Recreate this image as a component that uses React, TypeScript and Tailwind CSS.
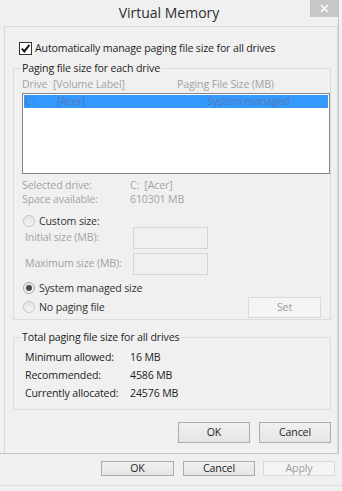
import React from 'react';
import clsx from 'clsx';

function Btn({ children, className, disabled }: { children: React.ReactNode; className?: string; disabled?: boolean }) {
  return (
    <button
      type="button"
      className={clsx(
        'flex items-center justify-center border leading-none',
        disabled
          ? 'border-[#d9d9d9] bg-[#f4f4f4] text-[#9d9d9d]'
          : 'border-[#acacac] bg-linear-to-b from-[#f0f0f0] to-[#e5e5e5] text-[#1e1e1e]',
        className
      )}
    >
      {children}
    </button>
  );
}

function Radio({ checked }: { checked?: boolean }) {
  return (
    <span
      className={clsx(
        'flex items-center justify-center w-[12px] h-[12px] rounded-full border bg-linear-to-b from-[#e4e4e4] to-[#f6f6f6]',
        checked ? 'border-[#a8a8a8]' : 'border-[#c4c4c4]'
      )}
    >
      {checked && <span className="w-[6px] h-[6px] rounded-full bg-[#4a4a4a]" />}
    </span>
  );
}

function Checkbox() {
  return (
    <span className="flex items-center justify-center w-[13px] h-[13px] border border-[#333] bg-white">
      <svg width="11" height="11" viewBox="0 0 11 11">
        <path d="M1.8 5.6 L4.3 8.4 L9.4 1.8" fill="none" stroke="#111" strokeWidth="1.9" />
      </svg>
    </span>
  );
}

export default function App() {
  return (
    <div className="relative w-[342px] h-[491px] overflow-hidden bg-[#f0f0f0] font-['Open_Sans',sans-serif] text-[10.6px] tracking-[-0.15px] text-[#1e1e1e]">
      {/* Performance Options window behind the dialog */}
      <div className="flex flex-col pt-[461px]">
        <div className="flex pl-[101px]">
          <Btn className="w-[73px] h-[15px]">OK</Btn>
          <Btn className="ml-[9px] w-[72px] h-[15px]">Cancel</Btn>
          <Btn disabled className="ml-[8px] w-[72px] h-[15px]">Apply</Btn>
        </div>
        <div className="mt-[9px] border-t border-[#dcdcdc]" />
      </div>

      {/* Virtual Memory dialog */}
      <div className="absolute left-0 top-0 w-[339px] h-[454px] border-r border-b border-[#c6c6c6] bg-[#f0f0f0]">
        <div className="flex h-[26px]">
          <div className="w-[28px]" />
          <div className="flex-1 text-center text-[14px] tracking-normal leading-[26px] text-[#2e2e2e]">Virtual Memory</div>
          <div className="flex items-center justify-center w-[28px] h-[17px] bg-[#c7c7c7]">
            <svg width="9" height="9" viewBox="0 0 9 9">
              <path d="M1 1 L8 8 M8 1 L1 8" stroke="#fff" strokeWidth="1.6" />
            </svg>
          </div>
        </div>

        <div className="ml-[4px] w-[334px] h-[427px] border-l border-t border-r border-[#d9d9d9]">
          <div className="flex items-center h-[12px] mt-[15px] pl-[14px]">
            <Checkbox />
            <span className="ml-[3px] leading-[12px]">Automatically manage paging file size for all drives</span>
          </div>

          <fieldset className="mt-[6px] ml-[8px] w-[318px] border border-[#dcdcdc]">
            <legend className="ml-[7px] px-[1px] leading-[16px]">Paging file size for each drive</legend>
            <div className="pl-[8px] pb-[1px]">
              <div className="flex h-[16px] leading-[16px] text-[#a3a3a3]">
                <span className="w-[31px]">Drive</span>
                <span className="w-[124px]">[Volume Label]</span>
                <span>Paging File Size (MB)</span>
              </div>
              <div className="mt-[1px] w-[308px] h-[81px] border border-[#828790] bg-white p-[1px]">
                <div className="flex h-[13px] items-center bg-[#3399ff] pl-[1px] leading-[13px] text-[#5577b0]">
                  <span className="w-[32px]">C:</span>
                  <span className="w-[150px]">[Acer]</span>
                  <span>System managed</span>
                </div>
              </div>

              <div className="mt-[4px] text-[#a3a3a3]">
                <div className="flex h-[14px] leading-[14px]">
                  <span className="w-[108px]">Selected drive:</span>
                  <span>C:&nbsp; [Acer]</span>
                </div>
                <div className="flex h-[14px] leading-[14px]">
                  <span className="w-[108px]">Space available:</span>
                  <span>610301 MB</span>
                </div>
              </div>

              <div className="flex items-center h-[12px] mt-[9px] pl-[1px]">
                <Radio />
                <span className="ml-[4px] leading-[12px] text-[#333]">Custom size:</span>
              </div>
              <div className="flex items-center h-[22px] text-[#a3a3a3]">
                <span className="w-[111px] pl-[3px]">Initial size (MB):</span>
                <span className="w-[75px] h-[22px] border border-[#d4d4d4]" />
              </div>
              <div className="flex items-center h-[22px] mt-[4px] text-[#a3a3a3]">
                <span className="w-[111px] pl-[3px]">Maximum size (MB):</span>
                <span className="w-[75px] h-[22px] border border-[#d4d4d4]" />
              </div>

              <div className="flex mt-[7px]">
                <div className="flex flex-col gap-[7px] pl-[1px]">
                  <div className="flex items-center h-[12px]">
                    <Radio checked />
                    <span className="ml-[4px] leading-[12px] text-[#333]">System managed size</span>
                  </div>
                  <div className="flex items-center h-[12px]">
                    <Radio />
                    <span className="ml-[4px] leading-[12px] text-[#333]">No paging file</span>
                  </div>
                </div>
                <Btn disabled className="ml-auto mr-[9px] mt-[15px] w-[73px] h-[21px]">Set</Btn>
              </div>
            </div>
          </fieldset>

          <fieldset className="mt-[9px] ml-[8px] w-[318px] border border-[#dcdcdc]">
            <legend className="ml-[7px] px-[1px] leading-[16px]">Total paging file size for all drives</legend>
            <div className="pl-[8px] pt-[3px] pb-[7px]">
              <div className="flex h-[18px] leading-[18px]">
                <span className="w-[108px] pl-[3px]">Minimum allowed:</span>
                <span>16 MB</span>
              </div>
              <div className="flex h-[18px] leading-[18px]">
                <span className="w-[108px] pl-[3px]">Recommended:</span>
                <span>4586 MB</span>
              </div>
              <div className="flex h-[18px] leading-[18px]">
                <span className="w-[108px] pl-[3px]">Currently allocated:</span>
                <span>24576 MB</span>
              </div>
            </div>
          </fieldset>

          <div className="flex justify-end gap-[9px] mt-[12px] pr-[6px]">
            <Btn className="w-[72px] h-[21px]">OK</Btn>
            <Btn className="w-[72px] h-[21px]">Cancel</Btn>
          </div>
        </div>
      </div>
    </div>
  );
}
